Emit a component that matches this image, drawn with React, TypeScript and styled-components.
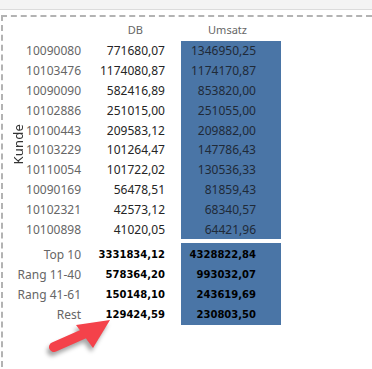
import * as React from "react";
import styled, { createGlobalStyle } from "styled-components";

const GlobalStyle = createGlobalStyle`
	html, body {
		margin: 0;
		padding: 0;
		background: #ffffff;
	}
	body {
		font-family: "Noto Sans", "Open Sans", sans-serif;
		width: 372px;
		height: 369px;
		overflow: hidden;
	}
`;

const Page = styled.div`
	position: relative;
	width: 372px;
	height: 369px;
	overflow: hidden;
`;

const TopBar = styled.div`
	height: 9px;
	background: #f4f4f4;
	border-bottom: 1px solid #dcdcdc;
`;

const Visual = styled.div`
	margin: 5px 0 0 1px;
	height: 360px;
	border-top: 2px dashed #b3b3b3;
	border-left: 2px dashed #b3b3b3;
`;

const Table = styled.div`
	display: grid;
	grid-template-columns: 25px 53px 84px 16px 100px;
	grid-template-rows: 24px repeat(10, 19.8px) 4px 22px 20px 20px 20px;
`;

const Header = styled.div<{ $col: number; $pad: number }>`
	grid-row: 1;
	grid-column: ${(p) => p.$col};
	text-align: right;
	padding-right: ${(p) => p.$pad}px;
	font-size: 11px;
	color: #666666;
	line-height: 24px;
	padding-top: 1px;
`;

const AxisLabel = styled.div`
	grid-column: 1;
	grid-row: 2 / span 10;
	display: flex;
	align-items: center;
	justify-content: center;
	padding: 8px 0 0 4px;
`;

const AxisText = styled.span`
	writing-mode: vertical-rl;
	transform: rotate(180deg);
	font-size: 13px;
	color: #333333;
	letter-spacing: 0.2px;
`;

const Cell = styled.div<{ $top?: boolean }>`
	display: flex;
	align-items: center;
	justify-content: flex-end;
	white-space: nowrap;
	padding-top: ${(p) => (p.$top ? 2 : 0)}px;
`;

const Label = styled(Cell)`
	grid-column: 2;
	font-size: 12px;
	color: #666666;
`;

const Value = styled(Cell)<{ $bold?: boolean }>`
	grid-column: 3;
	font-size: ${(p) => (p.$bold ? "10px" : "12px")};
	font-family: ${(p) =>
		p.$bold ? '"DejaVu Sans", sans-serif' : '"Noto Sans", sans-serif'};
	font-weight: ${(p) => (p.$bold ? 700 : 400)};
	color: ${(p) => (p.$bold ? "#000000" : "#252525")};
`;

const Highlight = styled(Value)`
	grid-column: 5;
	background: #4a75a6;
	padding-right: 25px;
	color: ${(p) => (p.$bold ? "#000000" : "#1f2a38")};
`;

const Arrow = styled.svg`
	position: absolute;
	left: 0;
	top: 0;
	pointer-events: none;
	filter: drop-shadow(-2px 4px 2px rgba(0, 0, 0, 0.35));
`;

const rows = [
	["10090080", "771680,07", "1346950,25"],
	["10103476", "1174080,87", "1174170,87"],
	["10090090", "582416,89", "853820,00"],
	["10102886", "251015,00", "251055,00"],
	["10100443", "209583,12", "209882,00"],
	["10103229", "101264,47", "147786,43"],
	["10110054", "101722,02", "130536,33"],
	["10090169", "56478,51", "81859,43"],
	["10102321", "42573,12", "68340,57"],
	["10100898", "41020,05", "64421,96"],
];

const totals = [
	["Top 10", "3331834,12", "4328822,84"],
	["Rang 11-40", "578364,20", "993032,07"],
	["Rang 41-61", "150148,10", "243619,69"],
	["Rest", "129424,59", "230803,50"],
];

export default function App() {
	return (
		<Page>
			<GlobalStyle />
			<TopBar />
			<Visual>
				<Table>
					<Header $col={3} $pad={22}>
						DB
					</Header>
					<Header $col={5} $pad={34}>
						Umsatz
					</Header>
					<AxisLabel>
						<AxisText>Kunde</AxisText>
					</AxisLabel>
					{rows.map(([k, db, u], i) => (
						<React.Fragment key={k}>
							<Label style={{ gridRow: i + 2 }}>{k}</Label>
							<Value style={{ gridRow: i + 2 }}>{db}</Value>
							<Highlight style={{ gridRow: i + 2 }}>{u}</Highlight>
						</React.Fragment>
					))}
					{totals.map(([k, db, u], i) => (
						<React.Fragment key={k}>
							<Label $top={i === 0} style={{ gridRow: i + 13 }}>
								{k}
							</Label>
							<Value $bold $top={i === 0} style={{ gridRow: i + 13 }}>
								{db}
							</Value>
							<Highlight $bold $top={i === 0} style={{ gridRow: i + 13 }}>
								{u}
							</Highlight>
						</React.Fragment>
					))}
				</Table>
			</Visual>
			<Arrow width="372" height="369" viewBox="0 0 372 369">
				<line
					x1="54"
					y1="347"
					x2="88"
					y2="332"
					stroke="#f4424a"
					strokeWidth="10"
					strokeLinecap="round"
				/>
				<polygon points="110,320 76,325 93,348" fill="#f4424a" />
			</Arrow>
		</Page>
	);
}
